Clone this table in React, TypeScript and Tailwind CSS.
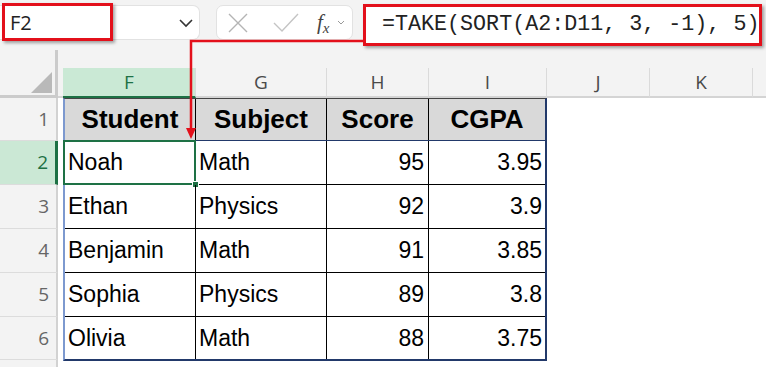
import React from "react";

const columns = [
	{ label: "F", width: "w-[133px]", selected: true },
	{ label: "G", width: "w-[131px]", selected: false },
	{ label: "H", width: "w-[102px]", selected: false },
	{ label: "I", width: "w-[118px]", selected: false },
	{ label: "J", width: "w-[103px]", selected: false },
	{ label: "K", width: "w-[103px]", selected: false },
	{ label: "", width: "w-[40px]", selected: false },
];

const rowHeights = ["h-[43px]", "h-[44px]", "h-[44px]", "h-[44px]", "h-[44px]", "h-[43px]", "h-[44px]"];

const students = [
	{ name: "Noah", subject: "Math", score: 95, cgpa: "3.95" },
	{ name: "Ethan", subject: "Physics", score: 92, cgpa: "3.9" },
	{ name: "Benjamin", subject: "Math", score: 91, cgpa: "3.85" },
	{ name: "Sophia", subject: "Physics", score: 89, cgpa: "3.8" },
	{ name: "Olivia", subject: "Math", score: 88, cgpa: "3.75" },
];

const uiFont = "font-['Open_Sans',sans-serif]";
const cellFont = "font-['Liberation_Sans',Arial,sans-serif]";

const Toolbar = () => (
	<div className="h-[50px] bg-[#f3f3f3] flex items-start pt-[4px]">
		{/* name box */}
		<div
			className={`shrink-0 mt-[1px] w-[200px] h-[35px] bg-white rounded-r-[7px] border border-l-0 border-[#e2e2e2] flex items-center justify-between pl-[10px] pr-[5px] text-[20px] text-[#222] ${uiFont}`}
		>
			<span>F2</span>
			<svg width="16" height="10" viewBox="0 0 16 10">
				<polyline points="2,2 8,8 14,2" fill="none" stroke="#333" strokeWidth="1.6" />
			</svg>
		</div>

		{/* cancel / enter / fx */}
		<div className="shrink-0 mt-[1px] ml-[16px] w-[137px] h-[35px] bg-white rounded-[7px] border border-[#e2e2e2] flex items-center pl-[9px]">
			<svg width="24" height="24" viewBox="0 0 24 24">
				<path d="M3 3 L21 21 M21 3 L3 21" stroke="#b4b4b4" strokeWidth="1.4" fill="none" />
			</svg>
			<svg width="28" height="24" viewBox="0 0 28 24" className="ml-[22px]">
				<polyline points="2,12 10,20 26,3" stroke="#c4c4c4" strokeWidth="1.4" fill="none" />
			</svg>
			<span className="ml-[17px] font-['Liberation_Serif',serif] italic text-[21px] leading-none text-[#444]">
				f<span className="text-[15px] relative top-[4px]">x</span>
			</span>
			<svg width="8" height="6" viewBox="0 0 8 6" className="ml-[7px]">
				<polyline points="1,1 4,4 7,1" fill="none" stroke="#999" strokeWidth="1" />
			</svg>
		</div>

		{/* formula bar */}
		<div className="shrink-0 ml-[10px] w-[399px] h-[42px] bg-white border-[3px] border-[#e3101b] shadow-[2px_2px_3px_rgba(0,0,0,0.35)] flex items-center pl-[16px] font-['Liberation_Mono',monospace] text-[21.7px] text-[#222] whitespace-nowrap">
			=TAKE(SORT(A2:D11, 3, -1), 5)
		</div>
	</div>
);

const ColumnHeaders = () => (
	<div className="h-[48px] bg-[#f3f3f3] flex">
		<div className="shrink-0 w-[58px] h-full border-r-[3px] border-b-[3px] border-[#cbcbcb] flex items-end justify-end pr-[3px] pb-[2px]">
			<svg width="21" height="21" viewBox="0 0 21 21">
				<polygon points="21,0 21,21 0,21" fill="#b9b9b9" />
			</svg>
		</div>
		<div className="shrink-0 w-[5px] h-full border-b-2 border-[#d4d4d4]" />
		<div className="flex items-end">
			{columns.map((c, i) => (
				<div
					key={i}
					className={`shrink-0 ${c.width} h-[30px] flex items-center justify-center border-r border-[#dadada] border-b-2 text-[19px] ${uiFont} ${
						c.selected ? "bg-[#cae9d5] text-[#1e7145] border-b-[#1e7145]" : "text-[#4a4a4a] border-b-[#d4d4d4]"
					}`}
				>
					{c.label}
				</div>
			))}
		</div>
	</div>
);

const RowHeaders = () => (
	<div className="shrink-0 w-[58px] flex flex-col">
		{rowHeights.map((h, i) => {
			const selected = i === 1;
			return (
				<div
					key={i}
					className={`${h} flex items-center justify-end pr-[7px] border-b border-[#dcdcdc] text-[19px] ${uiFont} ${
						selected
							? "bg-[#cbe8d5] text-[#1e7145] border-r-[3px] border-r-[#1e7145]"
							: "bg-[#f3f3f3] text-[#666] border-r-2 border-r-[#d2d2d2]"
					}`}
				>
					{i < 6 ? i + 1 : ""}
				</div>
			);
		})}
	</div>
);

const DataTable = () => (
	<div className={`shrink-0 w-[484px] self-start border-t border-[#444] border-l-2 border-l-[#7d99cf] border-r-2 border-r-[#22396a] border-b-2 border-b-[#22396a] ${cellFont}`}>
		<div className="flex h-[42px] bg-[#d9d9d9] border-b border-[#22396a] text-[26px] font-bold text-black">
			<div className="w-[131px] border-r border-black flex items-center justify-center">Student</div>
			<div className="w-[131px] border-r border-black flex items-center justify-center">Subject</div>
			<div className="w-[102px] border-r border-black flex items-center justify-center">Score</div>
			<div className="w-[116px] flex items-center justify-center">CGPA</div>
		</div>
		{students.map((s, i) => (
			<div
				key={s.name}
				className={`flex text-[23px] text-black ${i === students.length - 1 ? "h-[42px]" : "h-[44px] border-b border-black"}`}
			>
				<div className="relative w-[131px] border-r border-black flex items-center pl-[3px]">
					{s.name}
					{i === 0 && (
						<>
							<div className="absolute -left-[2px] -top-[1px] -right-[1px] -bottom-[1px] border-2 border-[#1e7145]" />
							<div className="absolute -right-[4px] -bottom-[4px] w-[7px] h-[7px] bg-[#1e7145] border border-white" />
						</>
					)}
				</div>
				<div className="w-[131px] border-r border-black flex items-center pl-[3px]">{s.subject}</div>
				<div className="w-[102px] border-r border-black flex items-center justify-end pr-[4px]">{s.score}</div>
				<div className="w-[116px] flex items-center justify-end pr-[3px]">{s.cgpa}</div>
			</div>
		))}
	</div>
);

export default function App() {
	return (
		<div className="relative w-[766px] h-[367px] overflow-hidden bg-white">
			<Toolbar />
			<ColumnHeaders />
			<div className="flex">
				<RowHeaders />
				<div className="shrink-0 w-[5px]" />
				<DataTable />
			</div>

			{/* annotations */}
			<div className="absolute left-[2px] top-[3px] w-[111px] h-[38px] border-[3px] border-[#e3101b] shadow-[2px_2px_3px_rgba(0,0,0,0.35)] pointer-events-none" />
			<svg className="absolute left-0 top-0 pointer-events-none" width="766" height="367" viewBox="0 0 766 367">
				<path d="M366 41 H191 V130" fill="none" stroke="#e3101b" strokeWidth="2.5" />
				<polygon points="186,128 196,128 191,139" fill="#e3101b" />
			</svg>
		</div>
	);
}
